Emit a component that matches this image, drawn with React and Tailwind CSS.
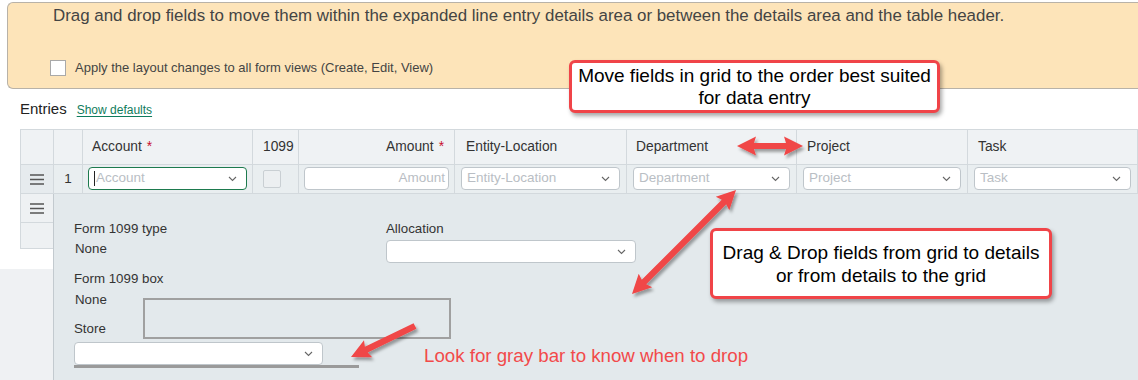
import React from 'react'

const RED = '#f04646'

function Chevron() {
  return (
    <svg width="9" height="6" viewBox="0 0 9 6" className="shrink-0">
      <path d="M1 1l3.5 3.5L8 1" fill="none" stroke="#666" strokeWidth="1.1" />
    </svg>
  )
}

function Hamburger() {
  return (
    <svg width="14" height="11" viewBox="0 0 14 11">
      <path d="M0 1h14M0 5.5h14M0 10h14" stroke="#555" strokeWidth="1.3" />
    </svg>
  )
}

function SelectBox({ placeholder, className = '', active = false }) {
  return (
    <div
      className={`flex h-[23px] items-center justify-between rounded-[4px] border bg-white pl-[5px] pr-[9px] ${
        active ? 'border-[#1d7a4e]' : 'border-[#bfc6cb]'
      } ${className}`}
    >
      <span className="flex items-center text-[13.5px] text-[#b9bec4]">
        {active && <span className="mr-[1px] h-[15px] w-px bg-[#222]" />}
        {placeholder}
      </span>
      <Chevron />
    </div>
  )
}

// polygon for a fat arrow from (x1,y1) to (x2,y2), head at the end (and start if double)
function arrowPoints(x1, y1, x2, y2, double) {
  const len = Math.hypot(x2 - x1, y2 - y1)
  const ux = (x2 - x1) / len
  const uy = (y2 - y1) / len
  const nx = -uy
  const ny = ux
  const w = 3.1
  const H = 9.5
  const L = 19
  const p = (x, y, a, b) => `${(x + ux * a + nx * b).toFixed(1)},${(y + uy * a + ny * b).toFixed(1)}`
  const pts = []
  if (double) {
    pts.push(p(x1, y1, 0, 0), p(x1, y1, L, H), p(x1, y1, L - 2, w))
  } else {
    pts.push(p(x1, y1, 0, w))
  }
  pts.push(p(x2, y2, -L + 2, w), p(x2, y2, -L, H), p(x2, y2, 0, 0), p(x2, y2, -L, -H), p(x2, y2, -L + 2, -w))
  if (double) {
    pts.push(p(x1, y1, L - 2, -w), p(x1, y1, L, -H))
  } else {
    pts.push(p(x1, y1, 0, -w))
  }
  return pts.join(' ')
}

const cell = 'border-r border-b border-[#d3d9dd]'

export default function App() {
  return (
    <div className="relative h-[380px] w-[1138px] overflow-hidden bg-white font-['Liberation_Sans',Arial,sans-serif] text-[#333]">
      {/* info banner */}
      <div className="ml-[7px] mt-[2px] h-[87px] rounded-l-[6px] border border-r-0 border-[#b8b2a8] bg-[#fde4b9]">
        <p className="pl-[45px] pt-[3px] text-[16.9px] leading-[20px] text-[#444]">
          Drag and drop fields to move them within the expanded line entry details area or between the details area and the table header.
        </p>
        <label className="mt-[32px] flex items-center gap-[9px] pl-[42px]">
          <span className="h-[16px] w-[16px] border border-[#a9a9a9] bg-white" />
          <span className="text-[13px] text-[#444]">Apply the layout changes to all form views (Create, Edit, View)</span>
        </label>
      </div>

      {/* section title */}
      <div className="flex h-[40px] items-center pl-[20px]">
        <span className="text-[15px] text-[#222]">Entries</span>
        <a className="ml-[10px] mt-[1px] text-[12px] text-[#0f7c5c] underline underline-offset-2">Show defaults</a>
      </div>

      {/* grid header */}
      <div className="ml-[20px] grid grid-cols-[33px_29px_170px_46px_156px_172px_170px_171px_1fr] border-l border-t border-[#d3d9dd] bg-[#eff2f4] text-[13.8px] text-[#333]">
        <div className={`${cell} h-[35px]`} />
        <div className={cell} />
        <div className={`${cell} flex items-center pl-[9px]`}>
          Account<span className="ml-[5px] text-[#c8102e]">*</span>
        </div>
        <div className={`${cell} flex items-center pl-[10px]`}>1099</div>
        <div className={`${cell} flex items-center justify-end pr-[10px]`}>
          Amount<span className="ml-[5px] text-[#c8102e]">*</span>
        </div>
        <div className={`${cell} flex items-center pl-[11px]`}>Entity-Location</div>
        <div className={`${cell} flex items-center pl-[9px]`}>Department</div>
        <div className={`${cell} flex items-center pl-[10px]`}>Project</div>
        <div className={`${cell} flex items-center pl-[10px]`}>Task</div>

        {/* row 1 */}
        <div className={`${cell} flex h-[29px] items-center justify-center bg-[#e6ebee]`}>
          <Hamburger />
        </div>
        <div className={`${cell} flex items-center justify-center bg-[#e9eef0] text-[13.5px]`}>1</div>
        <div className={`${cell} bg-[#e9eef0] px-[5px] pt-[2px]`}>
          <SelectBox placeholder="Account" active />
        </div>
        <div className={`${cell} bg-[#e9eef0] pl-[10px] pt-[5px]`}>
          <div className="h-[18px] w-[18px] rounded-[2px] border border-[#c9cfd3] bg-[#eceff1]" />
        </div>
        <div className={`${cell} bg-[#e9eef0] px-[5px] pt-[2px]`}>
          <div className="flex h-[23px] items-center justify-end rounded-[4px] border border-[#bfc6cb] bg-white pr-[3px] text-[13.5px] text-[#b9bec4]">
            Amount
          </div>
        </div>
        <div className={`${cell} bg-[#e9eef0] px-[6px] pt-[2px]`}>
          <SelectBox placeholder="Entity-Location" />
        </div>
        <div className={`${cell} bg-[#e9eef0] px-[6px] pt-[2px]`}>
          <SelectBox placeholder="Department" />
        </div>
        <div className={`${cell} bg-[#e9eef0] px-[6px] pt-[2px]`}>
          <SelectBox placeholder="Project" />
        </div>
        <div className={`${cell} bg-[#e9eef0] px-[6px] pt-[2px]`}>
          <SelectBox placeholder="Task" />
        </div>
      </div>

      {/* expanded line details */}
      <div className="flex h-[186px]">
        <div className="flex w-[53px] flex-col">
          <div className="ml-[20px] flex h-[29px] items-center justify-center border-b border-l border-[#d3d9dd] bg-[#eef1f3]">
            <Hamburger />
          </div>
          <div className="ml-[20px] h-[26px] border-b border-l border-[#d3d9dd] bg-[#eef1f3]" />
          <div className="h-[20px] bg-white" />
          <div className="flex-1 bg-[#eff1f3]" />
        </div>
        <div className="relative flex flex-1 border-l border-[#c3cacf] bg-[#e3e9ec] pl-[20px] pt-[25px] text-[13.3px] leading-[20px] text-[#333]">
          <div className="flex w-[312px] flex-col">
            <span>Form 1099 type</span>
            <span className="pl-px">None</span>
            <span className="mt-[10px]">Form 1099 box</span>
            <span className="mt-px pl-px">None</span>
            <span className="mt-[9px]">Store</span>
            <SelectBox placeholder="" className="mt-[3px] h-[22px] w-[249px]" />
            <div className="h-[3px] w-[285px] bg-[#9a9a9a]" />
          </div>
          <div className="flex flex-col">
            <span>Allocation</span>
            <SelectBox placeholder="" className="mt-px w-[250px]" />
          </div>
          {/* drag ghost */}
          <div className="absolute left-[89px] top-[104px] h-[41px] w-[308px] border-2 border-[#a0a0a0]" />
        </div>
      </div>

      {/* annotations */}
      <div className="absolute left-[569px] top-[60px] flex h-[53px] w-[371px] items-center justify-center rounded-[6px] border-[3px] border-[#f04448] bg-white text-center text-[19px] leading-[22px] text-black shadow-[2px_3px_4px_rgba(0,0,0,0.35)]">
        Move fields in grid to the order best suited
        <br />
        for data entry
      </div>
      <div className="absolute left-[710px] top-[228px] flex h-[71px] w-[342px] items-center justify-center rounded-[6px] border-[3px] border-[#f04448] bg-white text-center text-[19px] leading-[23px] text-black shadow-[2px_3px_4px_rgba(0,0,0,0.35)]">
        Drag &amp; Drop fields from grid to details
        <br />
        or from details to the grid
      </div>
      <span className="absolute left-[424px] top-[345px] text-[18.7px] leading-[22px] text-[#f24a4a]">
        Look for gray bar to know when to drop
      </span>

      <svg className="pointer-events-none absolute left-0 top-0" width="1138" height="380">
        <defs>
          <filter id="sh" x="-20%" y="-20%" width="140%" height="140%">
            <feDropShadow dx="2" dy="3" stdDeviation="1.6" floodColor="#000" floodOpacity="0.35" />
          </filter>
        </defs>
        <g fill={RED} filter="url(#sh)">
          <polygon points={arrowPoints(737, 146, 803, 146, true)} />
          <polygon points={arrowPoints(736, 190, 632, 294, true)} />
          <polygon points={arrowPoints(415, 326, 351, 357, false)} />
        </g>
      </svg>
    </div>
  )
}
